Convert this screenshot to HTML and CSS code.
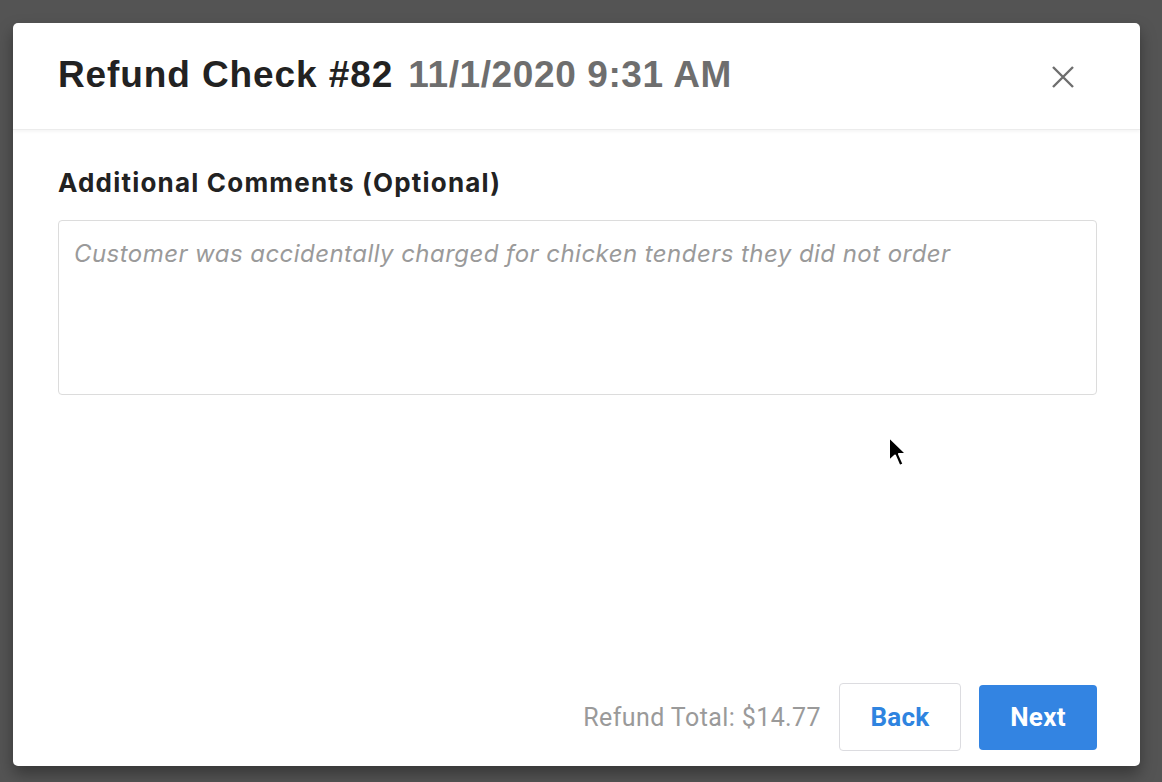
FILE: index.html
```html
<!DOCTYPE html>
<html>
<head>
<meta charset="utf-8">
<link rel="stylesheet" href="styles.css">
</head>
<body>
<div class="modal">
  <div class="header">
    <h1 class="title">Refund Check #82 <span class="date">11/1/2020 9:31 AM</span></h1>
    <button class="close" aria-label="Close">
      <svg width="24" height="24" viewBox="0 0 24 24"><path d="M2 2 L22 22 M22 2 L2 22" stroke="#6e6e6e" stroke-width="2.4" fill="none"/></svg>
    </button>
  </div>
  <div class="body">
    <label class="label">Additional Comments (Optional)</label>
    <div class="textarea"><span class="placeholder">Customer was accidentally charged for chicken tenders they did not order</span></div>
  </div>
  <div class="footer">
    <span class="total">Refund Total: $14.77</span>
    <button class="btn btn-back">Back</button>
    <button class="btn btn-next">Next</button>
  </div>
  <svg class="cursor" width="22" height="36" viewBox="0 0 22 36"><path d="M2 2 L2 26 L8 20.5 L12.5 31 L16.5 29.2 L12 19 L19.5 19 Z" fill="#000" stroke="#fff" stroke-width="2" stroke-linejoin="round"/></svg>
</div>
</body>
</html>
```
FILE: styles.css
```css
html, body { margin: 0; padding: 0; }
body {
  background: #545454;
  width: 1162px;
  height: 782px;
  overflow: hidden;
  font-family: "Liberation Sans", Arial, sans-serif;
}
.modal {
  position: relative;
  box-sizing: border-box;
  margin: 23px 0 0 13px;
  width: 1127px;
  height: 743px;
  background: #fff;
  border-radius: 5px;
  box-shadow: 0 8px 16px rgba(0,0,0,0.35);
  display: flex;
  flex-direction: column;
}
.header {
  height: 107px;
  box-sizing: border-box;
  padding: 0 65px 0 45px;
  display: flex;
  align-items: center;
  justify-content: space-between;
  border-bottom: 1px solid #ececec;
  box-shadow: 0 2px 3px rgba(0,0,0,0.04);
}
.title {
  margin: 0;
  font-size: 37px;
  font-weight: 700;
  color: #222;
  letter-spacing: 0.9px;
  padding-bottom: 2px;
}
.date {
  color: #6e6e6e;
  margin-left: 4px;
  letter-spacing: 0.6px;
}
.close {
  border: 0;
  background: none;
  padding: 0;
  width: 24px;
  height: 24px;
  display: flex;
  margin-top: 2px;
}
.body {
  flex: 1;
  padding: 37px 43px 0 45px;
}
.label {
  display: block;
  font-family: Inter, sans-serif;
  font-size: 26px;
  line-height: 31px;
  font-weight: 700;
  letter-spacing: 1.2px;
  color: #222;
  margin-bottom: 22px;
}
.textarea {
  height: 175px;
  box-sizing: border-box;
  border: 1.5px solid #dcdcdc;
  border-radius: 4px;
  padding: 18px 15px;
}
.placeholder {
  font-family: Inter, sans-serif;
  font-style: italic;
  font-size: 24px;
  letter-spacing: 0.45px;
  color: #9a9a9a;
}
.footer {
  display: flex;
  align-items: center;
  justify-content: flex-end;
  padding: 0 43px 15px 0;
}
.total {
  font-family: Roboto, sans-serif;
  font-size: 25px;
  letter-spacing: 0.4px;
  color: #9a9a9a;
  margin-right: 18px;
}
.btn {
  font-family: Roboto, sans-serif;
  font-weight: 700;
  font-size: 26px;
  letter-spacing: 0.3px;
  border-radius: 4px;
  height: 68px;
  box-sizing: border-box;
  cursor: pointer;
}
.btn-back {
  width: 122px;
  background: #fff;
  color: #2f84e0;
  border: 1.5px solid #dcdce0;
  margin-right: 18px;
}
.btn-next {
  width: 118px;
  height: 65px;
  background: #3384e2;
  color: #fff;
  border: 0;
}
.cursor {
  position: absolute;
  left: 874px;
  top: 412px;
}
```
